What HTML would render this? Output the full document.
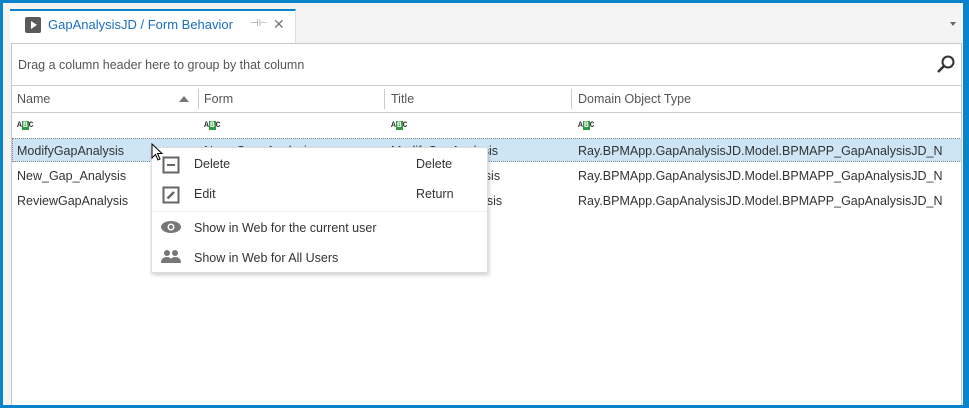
<!DOCTYPE html>
<html><head><style>
*{margin:0;padding:0;box-sizing:border-box}
body{width:969px;height:408px;background:#0a84c9;font-family:"Liberation Sans",sans-serif;font-size:12.5px;color:#333;position:relative;overflow:hidden}
.in{position:absolute;left:3px;top:3px;right:6px;bottom:3px;background:#f4f4f4}
.abs{position:absolute}
.grid{position:absolute;left:11px;top:43px;width:951px;height:362px;background:#fff;border:1px solid #c8c8c8;border-bottom:none;overflow:hidden}
.t{position:absolute;white-space:nowrap}
.abc{position:absolute;font-size:8px;font-weight:bold;color:#333;font-family:"Liberation Mono",monospace}
.abc b{background:#2e9a3e;color:#fff;padding:0 1px}
.menu{position:absolute;left:151px;top:147px;width:337px;height:126px;background:#fff;border:1px solid #ddd;box-shadow:1px 2px 4px rgba(0,0,0,.2)}
</style></head><body>
<div class="in"></div>
<div class="abs" style="left:10px;top:9px;width:286px;height:35px;background:#fff;border-top:2px solid #0a84c9;border-right:1px solid #ddd"></div>
<div class="abs" style="left:25px;top:17px;width:16px;height:16px;background:#5a5a5a;border-radius:2px"></div>
<div class="abs" style="left:31px;top:21px;width:0;height:0;border-left:6px solid #fff;border-top:4px solid transparent;border-bottom:4px solid transparent"></div>
<div class="t" style="left:48px;top:17px;color:#1a6fc0;font-size:13px">GapAnalysisJD / Form Behavior</div>
<div class="t" style="left:250px;top:18px;color:#999;font-size:10px">⊣⊢</div>
<div class="t" style="left:273px;top:16px;color:#777;font-size:14px">✕</div>
<div class="abs" style="left:950px;top:22px;border-top:4px solid #666;border-left:3px solid transparent;border-right:3px solid transparent"></div>
<div class="grid">
 <div class="t" style="left:6px;top:14px;color:#555">Drag a column header here to group by that column</div>
 <svg class="abs" style="left:924px;top:10px" width="20" height="20" viewBox="0 0 20 20"><circle cx="12" cy="8" r="5.5" fill="none" stroke="#333" stroke-width="2"/><line x1="8" y1="12" x2="2" y2="18" stroke="#333" stroke-width="2.5"/></svg>
 <div class="abs" style="left:0;top:41px;width:100%;height:1px;background:#ccc"></div>
 <div class="abs" style="left:0;top:68px;width:100%;height:1px;background:#ccc"></div>
 <div class="t" style="left:5px;top:48px;color:#555">Name</div>
 <div class="abs" style="left:167px;top:52px;border-bottom:6px solid #777;border-left:5px solid transparent;border-right:5px solid transparent"></div>
 <div class="abs" style="left:186px;top:45px;width:1px;height:20px;background:#ccc"></div>
 <div class="t" style="left:192px;top:48px;color:#555">Form</div>
 <div class="abs" style="left:372px;top:45px;width:1px;height:20px;background:#ccc"></div>
 <div class="t" style="left:379px;top:48px;color:#555">Title</div>
 <div class="abs" style="left:559px;top:45px;width:1px;height:20px;background:#ccc"></div>
 <div class="t" style="left:566px;top:48px;color:#555">Domain Object Type</div>
 <div class="abc" style="left:5px;top:77px">A<b>B</b>C</div>
 <div class="abc" style="left:192px;top:77px">A<b>B</b>C</div>
 <div class="abc" style="left:379px;top:77px">A<b>B</b>C</div>
 <div class="abc" style="left:566px;top:77px">A<b>B</b>C</div>
 <div class="abs" style="left:0;top:94px;width:950px;height:24px;background:#cde5f5;border:1px dotted #888"></div>
 <div class="t" style="left:5px;top:100px">ModifyGapAnalysis</div>
 <div class="t" style="left:192px;top:100px">New_Gap_Analysis</div>
 <div class="t" style="left:379px;top:100px">ModifyGapAnalysis</div>
 <div class="t" style="left:566px;top:100px">Ray.BPMApp.GapAnalysisJD.Model.BPMAPP_GapAnalysisJD_N</div>
 <div class="t" style="left:5px;top:125px">New_Gap_Analysis</div>
 <div class="t" style="left:379px;top:125px">New_Gap_Analysis</div>
 <div class="t" style="left:566px;top:125px">Ray.BPMApp.GapAnalysisJD.Model.BPMAPP_GapAnalysisJD_N</div>
 <div class="t" style="left:5px;top:150px">ReviewGapAnalysis</div>
 <div class="t" style="left:379px;top:150px">ReviewGapAnalysis</div>
 <div class="t" style="left:566px;top:150px">Ray.BPMApp.GapAnalysisJD.Model.BPMAPP_GapAnalysisJD_N</div>
</div>
<div class="menu">
 <svg class="abs" style="left:10px;top:8px" width="18" height="18"><rect x="1.5" y="1.5" width="15" height="15" fill="none" stroke="#666" stroke-width="2"/><line x1="5" y1="9" x2="13" y2="9" stroke="#666" stroke-width="2"/></svg>
 <div class="t" style="left:42px;top:9px">Delete</div><div class="t" style="left:264px;top:9px">Delete</div>
 <svg class="abs" style="left:10px;top:38px" width="18" height="18"><rect x="1.5" y="1.5" width="15" height="15" fill="none" stroke="#666" stroke-width="2"/><line x1="5.5" y1="12.5" x2="12" y2="6" stroke="#666" stroke-width="2.5"/></svg>
 <div class="t" style="left:42px;top:39px">Edit</div><div class="t" style="left:264px;top:39px">Return</div>
 <div class="abs" style="left:0;top:63px;width:335px;height:1px;background:#eee"></div>
 <svg class="abs" style="left:8px;top:72px" width="22" height="14"><ellipse cx="11" cy="7" rx="10" ry="6" fill="#777"/><circle cx="11" cy="7" r="3.5" fill="#fff"/><circle cx="11" cy="7" r="2" fill="#777"/></svg>
 <div class="t" style="left:42px;top:73px">Show in Web for the current user</div>
 <svg class="abs" style="left:8px;top:101px" width="22" height="16"><circle cx="7" cy="4" r="3" fill="#777"/><circle cx="15" cy="4" r="3" fill="#777"/><path d="M1 14 Q1 8 7 8 Q12 8 12 14Z M10 14 Q10 8 15 8 Q21 8 21 14Z" fill="#777"/></svg>
 <div class="t" style="left:42px;top:103px">Show in Web for All Users</div>
</div>
<svg class="abs" style="left:151px;top:143px" width="14" height="20"><path d="M1 1 L1 15 L4.5 11.5 L7 17 L9 16 L6.5 10.5 L11 10.5 Z" fill="#fff" stroke="#000" stroke-width="1"/></svg>
</body></html>
